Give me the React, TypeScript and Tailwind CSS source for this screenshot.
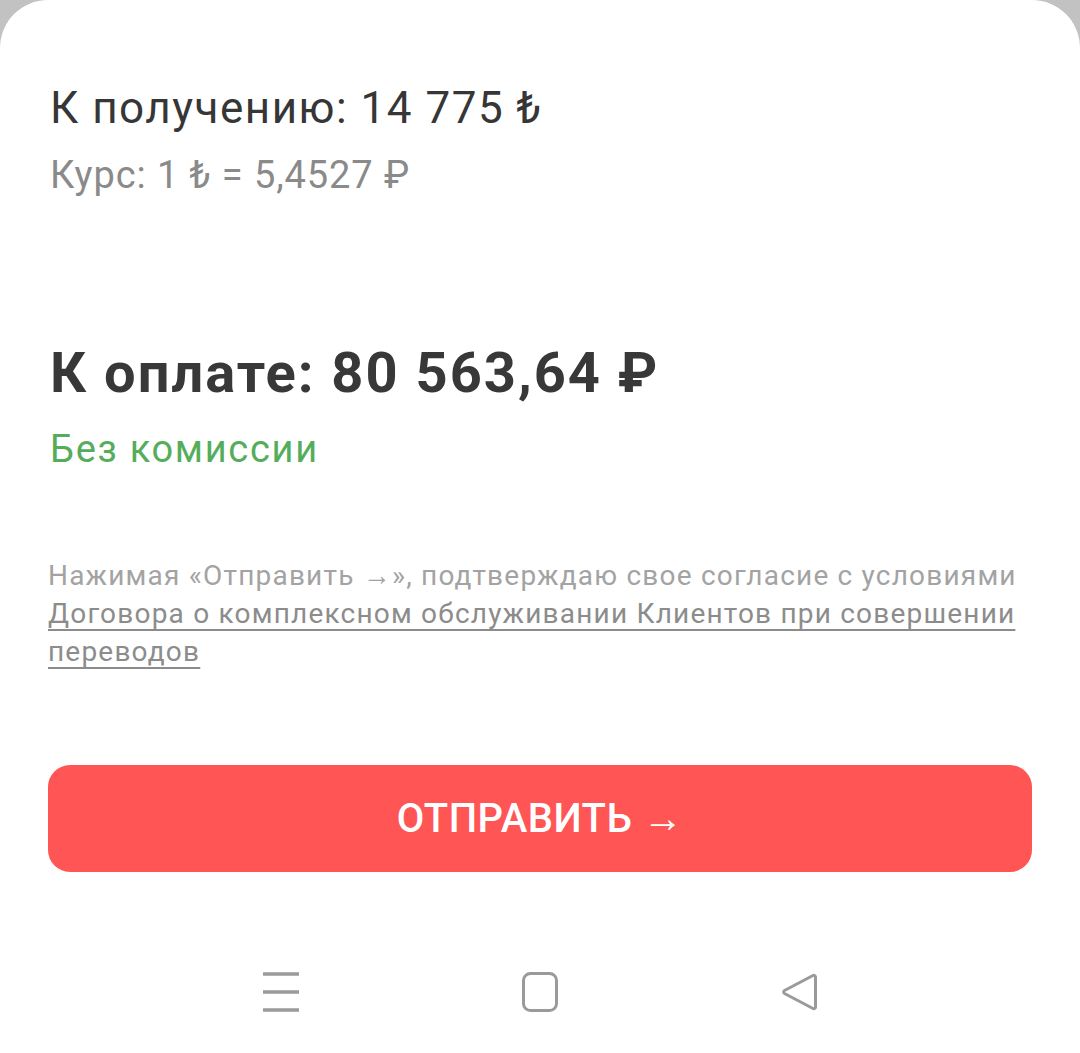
export default function App() {
  return (
    <div className="min-h-[1053px] w-[1080px] bg-[#c2c2c2] font-['Roboto',sans-serif]">
      <div className="flex min-h-[1053px] flex-col rounded-t-[48px] bg-white px-[48px]">
        <div className="mt-[80px] pl-[2px] text-[44px] leading-[56px] tracking-[1.5px] text-[#363636]">
          К получению: 14 775 ₺
        </div>
        <div className="mt-[15px] pl-[2px] text-[38px] leading-[48px] tracking-[0.9px] text-[#8a8a8a]">
          Курс: 1 ₺ = 5,4527 ₽
        </div>

        <div className="mt-[142px] pl-[2px] text-[56px] font-bold leading-[64px] tracking-[2px] text-[#383838]">
          К оплате: 80 563,64 ₽
        </div>
        <div className="mt-[20px] pl-[2px] text-[38px] leading-[48px] tracking-[1.7px] text-[#55ad5c]">
          Без комиссии
        </div>

        <p className="mt-[84px] whitespace-nowrap text-[28px] leading-[38px] tracking-[1.2px] text-[#a3a3a3]">
          Нажимая «Отправить →», подтверждаю свое согласие с условиями
          <br />
          <a className="text-[#8c8c8c] underline decoration-[2px] underline-offset-[6px]">
            Договора о комплексном обслуживании Клиентов при совершении
            <br />
            переводов
          </a>
        </p>

        <button className="mt-[94px] flex h-[107px] w-full items-center justify-center rounded-[22px] bg-[#ff5555] text-[40px] font-medium tracking-[0.5px] text-white">
          ОТПРАВИТЬ →
        </button>

        <nav className="mt-[100px] flex items-center justify-center gap-[223px]">
          <svg width="36" height="40" viewBox="0 0 36 40" fill="none">
            <path d="M0 2H36M0 20H36M0 38H36" stroke="#9a9a9a" strokeWidth="3.5" />
          </svg>
          <svg width="36" height="40" viewBox="0 0 36 40" fill="none">
            <rect x="1.5" y="1.5" width="33" height="37" rx="7" stroke="#9a9a9a" strokeWidth="3" />
          </svg>
          <svg width="36" height="40" viewBox="0 0 36 40" fill="none">
            <path
              d="M32 3.5C33 3 34.5 3.5 34.5 5V35C34.5 36.5 33 37 32 36.5L3.5 21.5C2.3 20.8 2.3 19.2 3.5 18.5Z"
              stroke="#9a9a9a"
              strokeWidth="3"
              strokeLinejoin="round"
            />
          </svg>
        </nav>
      </div>
    </div>
  );
}
